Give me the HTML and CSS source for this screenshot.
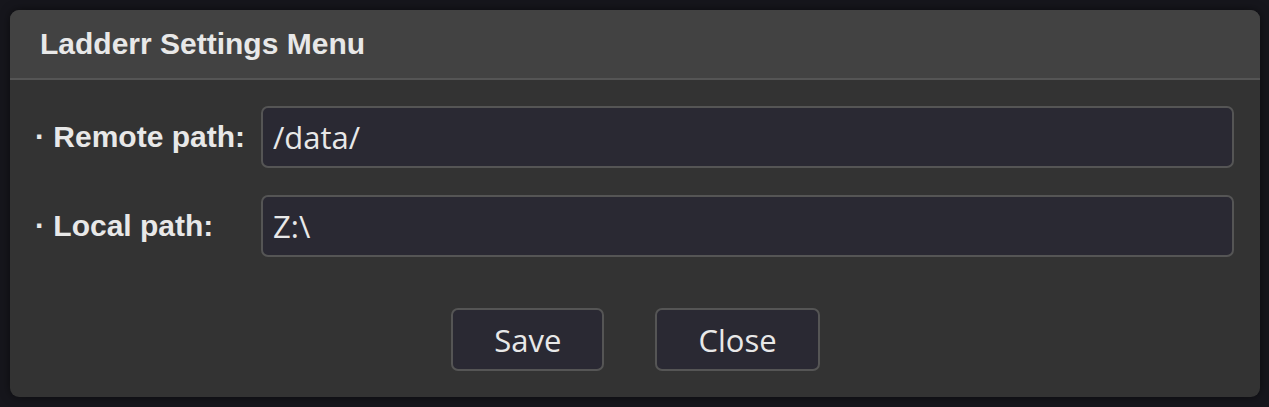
FILE: index.html
```html
<!DOCTYPE html>
<html lang="en">
<head>
<meta charset="utf-8">
<title>Ladderr Settings Menu</title>
<link rel="stylesheet" href="styles.css">
</head>
<body>
<div class="modal">
  <div class="modal-header">
    <h2 class="modal-title">Ladderr Settings Menu</h2>
  </div>
  <div class="modal-body">
    <div class="fields">
      <label class="field-label" for="remote">· Remote path:</label>
      <input class="field-input" id="remote" type="text" value="/data/">
      <label class="field-label" for="local">· Local path:</label>
      <input class="field-input" id="local" type="text" value="Z:\">
    </div>
    <div class="actions">
      <button class="btn" type="button">Save</button>
      <button class="btn" type="button">Close</button>
    </div>
  </div>
</div>
</body>
</html>
```
FILE: styles.css
```css
html, body {
  margin: 0;
  padding: 0;
  background: #16161c;
  height: 100%;
}
body {
  padding: 10px 9px 10px 10px;
  box-sizing: border-box;
  font-family: "Liberation Sans", Arial, sans-serif;
}
.modal {
  width: 1250px;
  height: 387px;
  background: #333333;
  border-radius: 9px;
  overflow: hidden;
  box-shadow: 0 0 10px rgba(0, 0, 0, 0.5);
  display: flex;
  flex-direction: column;
}
.modal-header {
  height: 68px;
  background: #424242;
  border-bottom: 2px solid #555555;
  display: flex;
  align-items: center;
  padding-left: 30px;
  flex-shrink: 0;
}
.modal-title {
  margin: 0;
  font-size: 30px;
  font-weight: bold;
  color: #e8e8e8;
}
.modal-body {
  padding: 26px 26px 0 25px;
  display: flex;
  flex-direction: column;
}
.fields {
  display: grid;
  grid-template-columns: 210px 1fr;
  column-gap: 16px;
  row-gap: 27px;
  align-items: center;
}
.field-label {
  font-size: 30px;
  font-weight: bold;
  color: #e8e8e8;
  white-space: nowrap;
}
.field-input {
  box-sizing: border-box;
  height: 62px;
  width: 100%;
  margin: 0;
  background: #2a2933;
  border: 2px solid #555555;
  border-radius: 7px;
  padding: 0 10px;
  color: #e8e8e8;
  font-family: "Open Sans", sans-serif;
  font-size: 31px;
  outline: none;
}
.actions {
  margin-top: 51px;
  display: flex;
  justify-content: center;
  gap: 51px;
  padding-left: 2px;
}
.btn {
  box-sizing: border-box;
  height: 63px;
  padding: 0 41px;
  background: #2a2933;
  border: 2px solid #555555;
  border-radius: 7px;
  color: #e8e8e8;
  font-family: "Open Sans", sans-serif;
  font-size: 31px;
  cursor: pointer;
}
```
